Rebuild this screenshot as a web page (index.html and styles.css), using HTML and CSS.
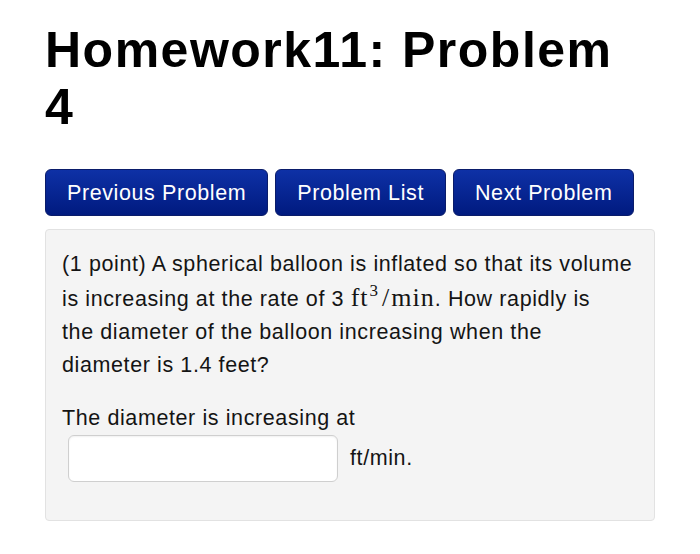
FILE: index.html
```html
<!DOCTYPE html>
<html lang="en">
<head>
<meta charset="utf-8">
<title>Homework11: Problem 4</title>
<link rel="stylesheet" href="styles.css">
</head>
<body>
<div class="page">
  <h1 class="title">Homework11: Problem 4</h1>
  <div class="nav">
    <a class="btn" href="#">Previous Problem</a>
    <a class="btn" href="#">Problem List</a>
    <a class="btn" href="#">Next Problem</a>
  </div>
  <div class="well">
    <p class="para">(1 point) A spherical balloon is inflated so that its volume is increasing at the rate of 3 <span class="math">ft<sup class="sup">3</sup><span class="slash">/</span>min</span>. How rapidly is <span class="keep">the diameter</span> of the balloon increasing when the <span class="keep">diameter is</span> 1.4 feet?</p>
    <div class="para answer">
      <div>The diameter is increasing at</div>
      <div class="answer-row">
        <input class="field" type="text" aria-label="answer">
        <span>ft/min.</span>
      </div>
    </div>
  </div>
</div>
</body>
</html>
```
FILE: styles.css
```css
html, body {
  margin: 0;
  padding: 0;
  background: #ffffff;
}
body {
  font-family: "Liberation Sans", Arial, Helvetica, sans-serif;
  color: #141414;
}
.page {
  width: 610px;
  padding: 22px 0 0 45px;
}
.title {
  margin: 0;
  width: 600px;
  font-size: 50px;
  line-height: 57px;
  font-weight: bold;
  letter-spacing: 1.5px;
  color: #000;
}
.nav {
  display: flex;
  gap: 7px;
  margin-top: 33px;
}
.btn {
  display: block;
  padding: 11px 21px 9px;
  font-size: 21.5px;
  line-height: 25px;
  letter-spacing: 0.6px;
  color: #ffffff;
  text-decoration: none;
  border: 1px solid #0a1c6a;
  border-radius: 6px;
  background: linear-gradient(#0e31a6, #001a7f);
}
.well {
  margin-top: 13px;
  padding: 18px 16px;
  background: #f4f4f4;
  border: 1px solid #e2e2e2;
  border-radius: 4px;
  font-size: 21.5px;
  line-height: 33px;
  letter-spacing: 0.6px;
}
.para {
  margin: 0 0 20px;
}
.keep {
  white-space: nowrap;
}
.math {
  font-family: "Liberation Serif", "Times New Roman", serif;
  font-size: 26px;
  letter-spacing: 1px;
}
.sup {
  font-size: 17px;
  line-height: 0;
  vertical-align: 10px;
  margin-left: 1px;
  margin-right: 3px;
}
.slash {
  margin-right: 1px;
}
.answer-row {
  display: flex;
  align-items: center;
  gap: 12px;
}
.field {
  box-sizing: border-box;
  width: 270px;
  height: 47px;
  margin-left: 6px;
  border: 1px solid #cfcfcf;
  border-radius: 6px;
  background: #ffffff;
  box-shadow: inset 0 1px 2px rgba(0,0,0,0.06);
  font-size: 20px;
}
```
